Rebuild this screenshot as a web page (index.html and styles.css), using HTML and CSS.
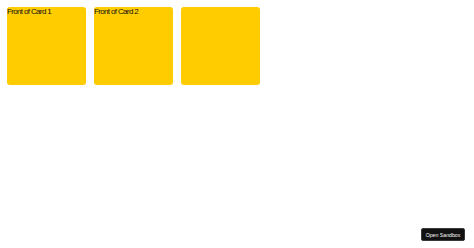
FILE: index.html
```html
<!DOCTYPE html>
<html>
<head>
<meta charset="utf-8">
<link rel="stylesheet" href="styles.css">
</head>
<body>
<div class="cards">
  <div class="card">Front of Card 1</div>
  <div class="card">Front of Card 2</div>
  <div class="card"></div>
</div>
<a class="sandbox">Open Sandbox</a>
</body>
</html>
```
FILE: styles.css
```css
html, body { margin: 0; padding: 0; background: #fff; }
body { font-family: "Liberation Sans", Arial, sans-serif; width: 474px; height: 248px; position: relative; }
.cards { display: flex; gap: 8px; padding: 7px; }
.card {
  width: 79px; height: 78px; background: #ffcc00; border-radius: 3px;
  font-size: 8px; line-height: 9px; color: #111; letter-spacing: -0.65px;
}
.sandbox {
  position: absolute; left: 421px; top: 228px; width: 44px; height: 13px;
  background: #111; color: #fff; font-size: 5.2px; border-radius: 2px;
  display: flex; align-items: center; justify-content: center;
  border: 1px solid #3a3a3a; box-sizing: border-box;
}
```
